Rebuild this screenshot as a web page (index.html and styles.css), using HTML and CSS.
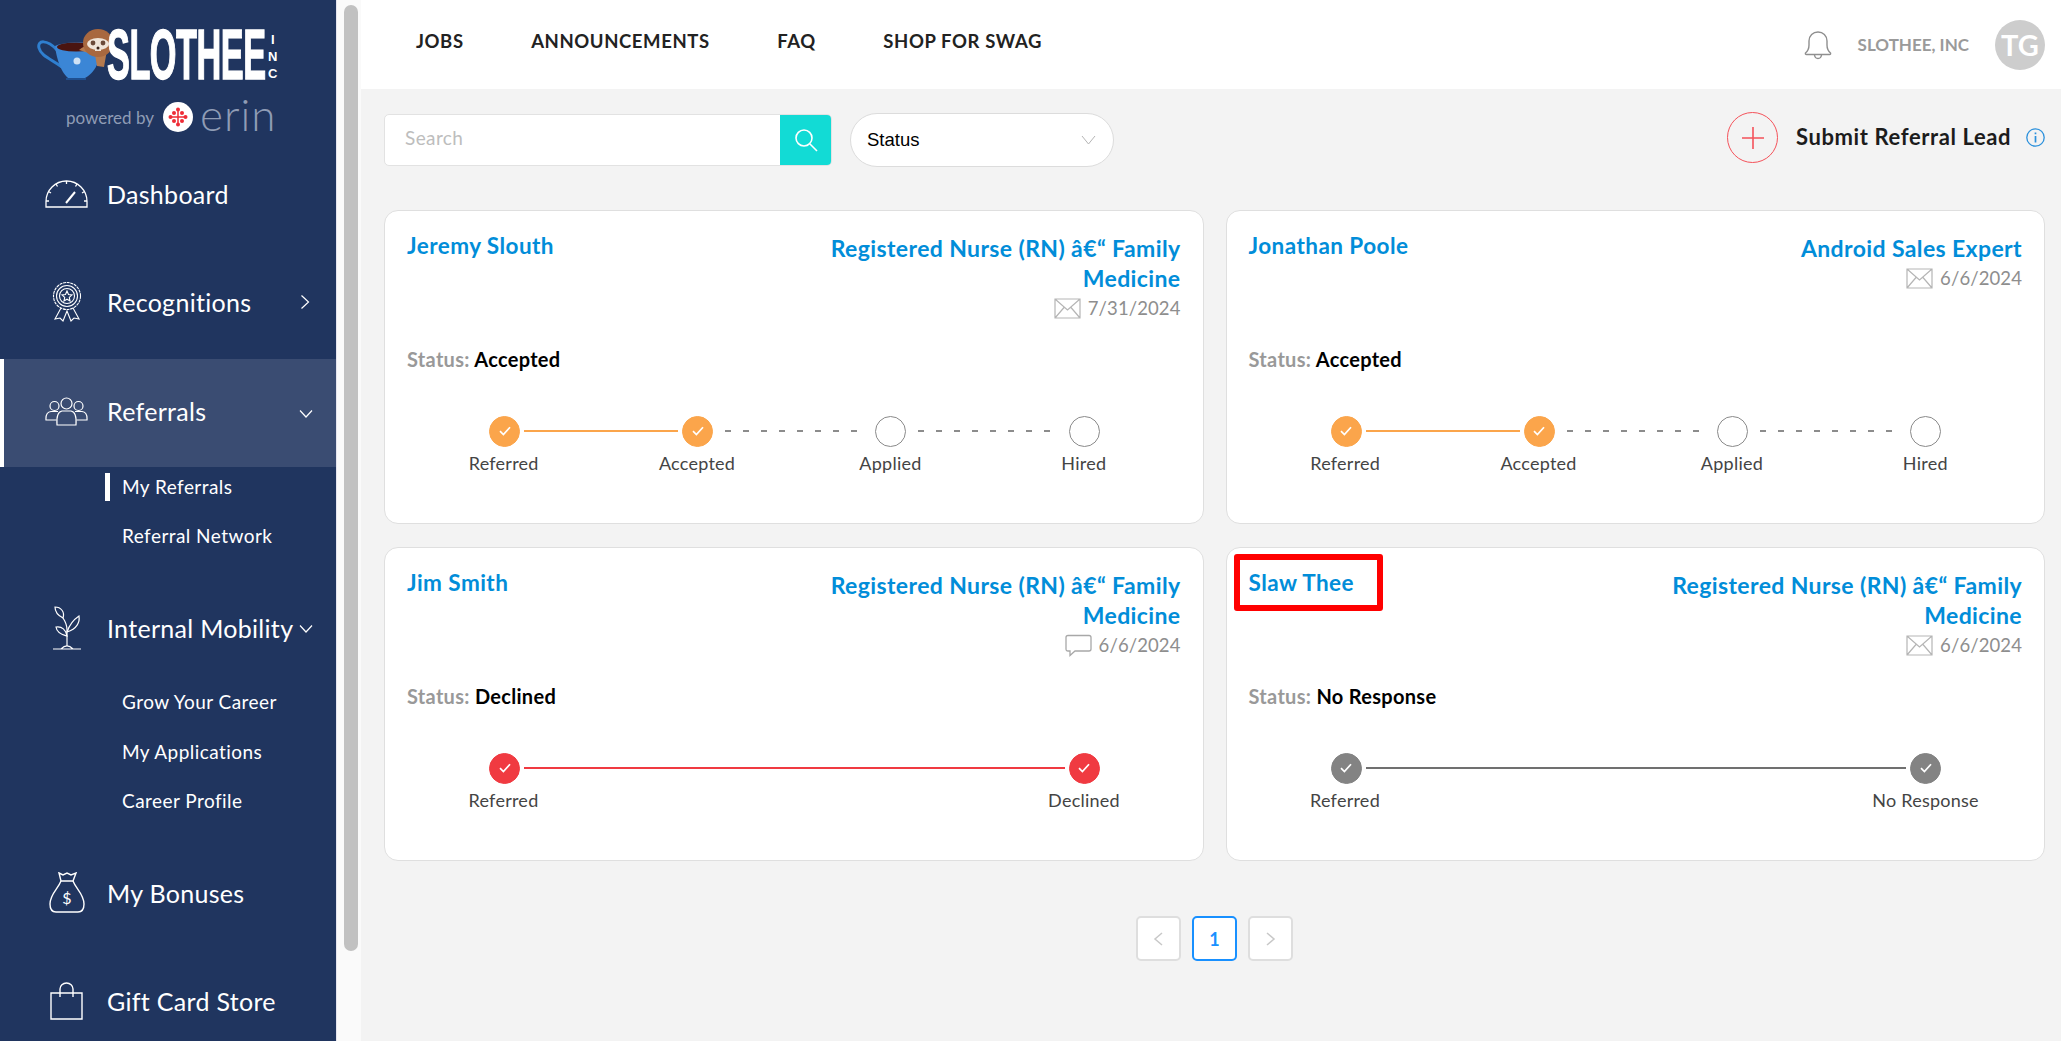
FILE: index.html
```html
<!DOCTYPE html>
<html lang="en">

<head>
    <meta charset="UTF-8">
    <meta name="viewport" content="width=device-width, initial-scale=1.0">
    <title>Slothee - My Referrals</title>
    <link rel="stylesheet" href="styles.css">
</head>

<body>
    <svg class="sprites" width="0" height="0">
        <symbol id="check" viewBox="0 0 12 10">
            <path d="M1 5.2 L4.4 8.6 L11 1.2" fill="none" stroke="#fff" stroke-width="1.7" />
        </symbol>
        <symbol id="mail" viewBox="0 0 27 21">
            <path d="M1 1 H26 V20 H1 Z M1 1 L13.5 12 L26 1 M1 20 L10 9.5 M26 20 L17 9.5" fill="none" stroke="#b5b5b5" stroke-width="1.2" />
        </symbol>
        <symbol id="chat" viewBox="0 0 27 23">
            <path d="M3 1.5 H24 Q26 1.5 26 3.5 V15 Q26 17 24 17 H10 L5 21.5 V17 H3 Q1 17 1 15 V3.5 Q1 1.5 3 1.5 Z" fill="none" stroke="#a8a8a8" stroke-width="1.3" />
        </symbol>
    </svg>

    <div id="app">
        <aside class="sidebar">
            <div class="logo">
                <div class="logo-top">
                    <svg class="logo-cup" width="78" height="56" viewBox="0 0 78 56">
                        <path d="M20 24 C10 13 0 14 2 22 C4 30 14 33 25 41" fill="none" stroke="#2f7fd0" stroke-width="3" />
                        <path d="M18 20 C30 15 52 15 64 20 C64 36 56 50 45 53 H33 C26 50 20 36 18 20 Z" fill="#3b86d6" />
                        <path d="M29 53 H49" stroke="#1f4f8f" stroke-width="2" />
                        <ellipse cx="39" cy="21" rx="19" ry="4.5" fill="#4a1410" />
                        <circle cx="40" cy="35" r="3.5" fill="#cfe2f5" />
                        <path d="M42 24 C50 16 60 20 70 24 L67 41 L60 40 L58 29 Z" fill="#b57a4e" />
                        <ellipse cx="61" cy="17" rx="15" ry="14" fill="#a8683f" />
                        <ellipse cx="61" cy="18" rx="11" ry="6" fill="#efe4d8" />
                        <path d="M61 15 V25" stroke="#efe4d8" stroke-width="6" />
                        <circle cx="56" cy="17" r="2.4" fill="#6b4a38" />
                        <circle cx="66" cy="17" r="2.4" fill="#6b4a38" />
                        <circle cx="61" cy="22" r="1.5" fill="#3a2318" />
                    </svg>
                    <span class="logo-name">SLOTHEE</span>
                    <span class="logo-inc"><span>I</span><span>N</span><span>C</span></span>
                </div>
                <div class="logo-sub">
                    <span class="powered">powered by</span>
                    <svg width="30" height="30" viewBox="0 0 30 30">
                        <circle cx="15" cy="15" r="15" fill="#fff" />
                        <path d="M15 6 V24 M6 15 H24" stroke="#ee2c36" stroke-width="1.5" />
                        <g fill="#ee2c36">
                            <circle cx="15" cy="7.5" r="2" />
                            <circle cx="15" cy="22.5" r="2" />
                            <circle cx="7.5" cy="15" r="2" />
                            <circle cx="22.5" cy="15" r="2" />
                            <circle cx="11" cy="11" r="2" />
                            <circle cx="19" cy="11" r="2" />
                            <circle cx="11" cy="19" r="2" />
                            <circle cx="19" cy="19" r="2" />
                        </g>
                    </svg>
                    <span class="erin">erin</span>
                </div>
            </div>

            <nav class="menu">
                <a class="menu-item">
                    <span class="menu-icon">
                        <svg width="43" height="28" viewBox="0 0 43 28" fill="none" stroke="#fff" stroke-width="1.3">
                            <path d="M1 27 V21.5 A20.5 20.5 0 0 1 42 21.5 V27 Z" />
                            <path d="M21.5 1 V4 M11 4 L12.5 6.5 M32 4 L30.5 6.5 M3.5 11.5 L6 13 M39.5 11.5 L37 13 M1 21 H4 M42 21 H39" />
                            <path d="M21 23 L30 12" stroke-width="2" />
                        </svg>
                    </span>
                    Dashboard
                </a>
                <a class="menu-item">
                    <span class="menu-icon">
                        <svg width="30" height="40" viewBox="0 0 30 40" fill="none" stroke="#fff" stroke-width="1.1">
                            <circle cx="15" cy="14" r="13.5" stroke-dasharray="3 .7" />
                            <circle cx="15" cy="14" r="10.5" />
                            <circle cx="15" cy="14" r="7.5" />
                            <path d="M15 9 L16.5 12.5 L20 13 L17.3 15.4 L18 19 L15 17.2 L12 19 L12.7 15.4 L10 13 L13.5 12.5 Z" />
                            <path d="M9 26 L3 37 L8 36 L11 39 L15 29 L19 39 L22 36 L27 37 L21 26" />
                        </svg>
                    </span>
                    Recognitions
                    <svg class="chevron right" width="10" height="16" viewBox="0 0 10 16">
                        <path d="M1.5 1.5 L8.5 8 L1.5 14.5" fill="none" stroke="#fff" stroke-width="1.2" />
                    </svg>
                </a>
                <a class="menu-item active">
                    <span class="menu-icon">
                        <svg width="43" height="29" viewBox="0 0 43 29" fill="none" stroke="#fff" stroke-width="1.2">
                            <circle cx="21.5" cy="6.5" r="5.5" />
                            <path d="M12 28 Q11 15 17 14 H26 Q32 15 31 28 Z" />
                            <circle cx="9.5" cy="9" r="4.5" />
                            <circle cx="33.5" cy="9" r="4.5" />
                            <path d="M11.5 23 H1 Q0.5 15 6 14.5 H13 M31.5 23 H42 Q42.5 15 37 14.5 H30" />
                        </svg>
                    </span>
                    Referrals
                    <svg class="chevron" width="14" height="10" viewBox="0 0 14 10">
                        <path d="M1 1.5 L7 8 L13 1.5" fill="none" stroke="#fff" stroke-width="1.2" />
                    </svg>
                </a>
                <div class="submenu first-sub">
                    <a class="sub-item current">My Referrals</a>
                    <a class="sub-item">Referral Network</a>
                </div>
                <a class="menu-item">
                    <span class="menu-icon">
                        <svg width="30" height="44" viewBox="0 0 30 44" fill="none" stroke="#fff" stroke-width="1.2">
                            <path d="M15 40 V24 C15 18 13 15 11 12" />
                            <path d="M11 12 C5 9 3 5 3 1 C9 1 13 6 11 12 Z" />
                            <path d="M15 26 C17 20 21 14 27 10 C28 16 25 23 15 26 Z" />
                            <path d="M15 30 C12 29 5 28 4 21 C10 20 14 24 15 30 Z" />
                            <path d="M1 43 H29 M9 43 Q15 37 21 43" />
                        </svg>
                    </span>
                    Internal Mobility
                    <svg class="chevron" width="14" height="10" viewBox="0 0 14 10">
                        <path d="M1 1.5 L7 8 L13 1.5" fill="none" stroke="#fff" stroke-width="1.2" />
                    </svg>
                </a>
                <div class="submenu second-sub">
                    <a class="sub-item">Grow Your Career</a>
                    <a class="sub-item">My Applications</a>
                    <a class="sub-item">Career Profile</a>
                </div>
                <a class="menu-item">
                    <span class="menu-icon">
                        <svg width="36" height="41" viewBox="0 0 36 41" fill="none" stroke="#fff" stroke-width="1.4">
                            <path d="M10 1 L14 3 L18 1 L22 3 L27 1 L24 9 H12 Z" />
                            <path d="M12 9 C9 17 1 22 1 32 C1 38 4 40 7 40 H29 C32 40 35 38 35 32 C35 22 27 17 24 9" />
                            <text class="bag-dollar" x="18" y="32" text-anchor="middle" fill="#fff" stroke="none">$</text>
                        </svg>
                    </span>
                    My Bonuses
                </a>
                <a class="menu-item">
                    <span class="menu-icon">
                        <svg width="33" height="38" viewBox="0 0 33 38" fill="none" stroke="#fff" stroke-width="1.4">
                            <path d="M10 11 H1 V37 H32 V11 H23" />
                            <path d="M10 15 V7 A6.5 6 0 0 1 23 7 V15 M10 11 H23" />
                        </svg>
                    </span>
                    Gift Card Store
                </a>
            </nav>
        </aside>

        <div class="scroll-track">
            <div class="scroll-thumb"></div>
        </div>

        <div class="page">
            <header class="topbar">
                <nav class="top-links">
                    <a>JOBS</a>
                    <a>ANNOUNCEMENTS</a>
                    <a>FAQ</a>
                    <a>SHOP FOR SWAG</a>
                </nav>
                <div class="top-user">
                    <svg width="28" height="30" viewBox="0 0 28 30" fill="none" stroke="#8f8f8f" stroke-width="1.4">
                        <path d="M1.5 23 Q5 20 5 15 V11 C5 5.5 9 2 14 2 C19 2 23 5.5 23 11 V15 Q23 20 26.5 23 Q27 24.5 25.5 24.5 H2.5 Q1 24.5 1.5 23 Z" />
                        <path d="M10.5 25 Q11 28.5 14 28.5 Q17 28.5 17.5 25" />
                    </svg>
                    <span class="company">SLOTHEE, INC</span>
                    <span class="avatar">TG</span>
                </div>
            </header>

            <main class="content">
                <div class="toolbar">
                    <div class="search">
                        <span class="search-text">Search</span>
                        <span class="search-btn">
                            <svg width="24" height="24" viewBox="0 0 24 24" fill="none" stroke="#fff" stroke-width="1.6">
                                <circle cx="10" cy="10" r="8" />
                                <path d="M16 16 L23 23" />
                            </svg>
                        </span>
                    </div>
                    <div class="status-select">
                        <span>Status</span>
                        <svg width="15" height="10" viewBox="0 0 15 10">
                            <path d="M1 1 L7.5 9 L14 1" fill="none" stroke="#b5b5b5" stroke-width="1" />
                        </svg>
                    </div>
                    <div class="submit-lead">
                        <span class="plus">
                            <svg width="24" height="24" viewBox="0 0 24 24">
                                <path d="M12 1 V23 M1 12 H23" stroke="#f4525a" stroke-width="1.6" />
                            </svg>
                        </span>
                        <span class="submit-text">Submit Referral Lead</span>
                        <svg width="19" height="19" viewBox="0 0 19 19" fill="none" stroke="#2a90dc" stroke-width="1.3">
                            <circle cx="9.5" cy="9.5" r="8.7" />
                            <path d="M9.5 8 V14.5 M9.5 4.5 V6.2" stroke-width="1.7" />
                        </svg>
                    </div>
                </div>

                <div class="cards">
                    <section class="card">
                        <div class="card-head">
                            <a class="name">Jeremy Slouth</a>
                            <div class="job">
                                <a>Registered Nurse (RN) â€&ldquo; Family Medicine</a>
                                <div class="date"><svg width="27" height="21"><use href="#mail" /></svg>7/31/2024</div>
                            </div>
                        </div>
                        <p class="status"><span>Status:</span> Accepted</p>
                        <div class="track">
                            <span class="dot orange"><svg width="12" height="10"><use href="#check" /></svg></span>
                            <span class="line orange"></span>
                            <span class="dot orange"><svg width="12" height="10"><use href="#check" /></svg></span>
                            <span class="line dashed"></span>
                            <span class="dot"></span>
                            <span class="line dashed"></span>
                            <span class="dot"></span>
                        </div>
                        <div class="labels">
                            <span>Referred</span>
                            <span>Accepted</span>
                            <span>Applied</span>
                            <span>Hired</span>
                        </div>
                    </section>

                    <section class="card">
                        <div class="card-head">
                            <a class="name">Jonathan Poole</a>
                            <div class="job">
                                <a>Android Sales Expert</a>
                                <div class="date"><svg width="27" height="21"><use href="#mail" /></svg>6/6/2024</div>
                            </div>
                        </div>
                        <p class="status"><span>Status:</span> Accepted</p>
                        <div class="track">
                            <span class="dot orange"><svg width="12" height="10"><use href="#check" /></svg></span>
                            <span class="line orange"></span>
                            <span class="dot orange"><svg width="12" height="10"><use href="#check" /></svg></span>
                            <span class="line dashed"></span>
                            <span class="dot"></span>
                            <span class="line dashed"></span>
                            <span class="dot"></span>
                        </div>
                        <div class="labels">
                            <span>Referred</span>
                            <span>Accepted</span>
                            <span>Applied</span>
                            <span>Hired</span>
                        </div>
                    </section>

                    <section class="card">
                        <div class="card-head">
                            <a class="name">Jim Smith</a>
                            <div class="job">
                                <a>Registered Nurse (RN) â€&ldquo; Family Medicine</a>
                                <div class="date"><svg width="27" height="23"><use href="#chat" /></svg>6/6/2024</div>
                            </div>
                        </div>
                        <p class="status"><span>Status:</span> Declined</p>
                        <div class="track">
                            <span class="dot red"><svg width="12" height="10"><use href="#check" /></svg></span>
                            <span class="line red"></span>
                            <span class="dot red"><svg width="12" height="10"><use href="#check" /></svg></span>
                        </div>
                        <div class="labels two">
                            <span>Referred</span>
                            <span>Declined</span>
                        </div>
                    </section>

                    <section class="card">
                        <div class="highlight"></div>
                        <div class="card-head">
                            <a class="name">Slaw Thee</a>
                            <div class="job">
                                <a>Registered Nurse (RN) â€&ldquo; Family Medicine</a>
                                <div class="date"><svg width="27" height="21"><use href="#mail" /></svg>6/6/2024</div>
                            </div>
                        </div>
                        <p class="status"><span>Status:</span> No Response</p>
                        <div class="track">
                            <span class="dot gray"><svg width="12" height="10"><use href="#check" /></svg></span>
                            <span class="line gray"></span>
                            <span class="dot gray"><svg width="12" height="10"><use href="#check" /></svg></span>
                        </div>
                        <div class="labels two">
                            <span>Referred</span>
                            <span>No Response</span>
                        </div>
                    </section>
                </div>

                <div class="pagination">
                    <span class="page-btn">
                        <svg width="11" height="14" viewBox="0 0 11 14"><path d="M9 1 L2 7 L9 13" fill="none" stroke="#c8c8c8" stroke-width="1.5" /></svg>
                    </span>
                    <span class="page-btn selected">1</span>
                    <span class="page-btn">
                        <svg width="11" height="14" viewBox="0 0 11 14"><path d="M2 1 L9 7 L2 13" fill="none" stroke="#c8c8c8" stroke-width="1.5" /></svg>
                    </span>
                </div>
            </main>
        </div>
    </div>
</body>

</html>
```

FILE: styles.css
```css
* {
    padding: 0;
    margin: 0;
    box-sizing: border-box;
}

html,
body {
    height: 100%;
    overflow: hidden;
}

body {
    font-family: Lato, "Noto Sans", sans-serif;
    color: #000;
}

.sprites {
    position: absolute;
}

#app {
    height: 100vh;
    display: flex;
}

/* sidebar */

.sidebar {
    width: 336px;
    flex-shrink: 0;
    background-color: #20355f;
    color: #fff;
    overflow: hidden;
}

.logo {
    height: 139.5px;
    padding: 26px 0 0 37px;
}

.logo-top {
    display: flex;
    align-items: flex-start;
}

.logo-cup {
    margin-right: -8px;
    flex-shrink: 0;
}

.logo-name {
    width: 158px;
    font-family: "Liberation Sans", sans-serif;
    font-weight: 700;
    font-size: 70px;
    line-height: 58px;
    letter-spacing: -1px;
    transform: scaleX(0.49);
    transform-origin: left center;
    white-space: nowrap;
    -webkit-text-stroke: 1.5px #fff;
}

.logo-inc {
    display: flex;
    flex-direction: column;
    margin: 5px 0 0 3px;
    font-family: "Liberation Sans", sans-serif;
    font-weight: 700;
    font-size: 13px;
    line-height: 17px;
    text-align: center;
}

.logo-sub {
    display: flex;
    align-items: center;
    margin: 18px 0 0 29px;
    color: #8f9cb5;
}

.powered {
    width: 97px;
    font-size: 17px;
}

.erin {
    margin: -6px 0 0 7px;
    font-weight: 300;
    font-size: 44px;
    line-height: 30px;
    letter-spacing: 1px;
}

.menu {
    display: flex;
    flex-direction: column;
}

.menu-item {
    height: 108.5px;
    flex-shrink: 0;
    display: flex;
    align-items: center;
    padding-left: 45px;
    font-size: 25px;
    letter-spacing: 0.3px;
    white-space: nowrap;
    position: relative;
}

.menu-item.active {
    height: 108px;
    margin-top: 2.5px;
    padding-bottom: 4px;
    background-color: #3a4c72;
    border-left: 4px solid #fff;
    padding-left: 41px;
}

.menu-icon {
    width: 43px;
    margin-right: 19px;
    display: flex;
    justify-content: center;
}

.chevron {
    position: absolute;
    right: 23px;
    top: 50%;
    margin-top: -4px;
}

.chevron.right {
    right: 26px;
    margin-top: -8px;
}

.bag-dollar {
    font-size: 16px;
}

.submenu {
    display: flex;
    flex-direction: column;
}

.first-sub {
    margin-top: -5.5px;
    height: 112px;
}

.second-sub {
    margin-top: -5px;
    height: 161.5px;
}

.sub-item {
    height: 49.5px;
    padding-left: 122px;
    display: flex;
    align-items: center;
    font-size: 19px;
    letter-spacing: 0.45px;
    position: relative;
}

.sub-item.current::before {
    content: "";
    position: absolute;
    left: 105px;
    top: 11px;
    width: 5px;
    height: 28px;
    background-color: #fff;
}

.scroll-track {
    width: 25px;
    flex-shrink: 0;
    padding: 5px 4px 0 7px;
    background-color: #fafafa;
    border-left: 1px solid #e4e4ee;
}

.scroll-thumb {
    width: 14px;
    height: 946px;
    border-radius: 7px;
    background-color: #c1c1c1;
}

/* top */

.page {
    flex: 1;
    display: flex;
    flex-direction: column;
    min-width: 0;
    background-color: #f3f3f3;
}

.topbar {
    height: 89px;
    flex-shrink: 0;
    background-color: white;
    display: flex;
    align-items: center;
    justify-content: space-between;
    padding: 0 16px 8px 55px;
}

.top-links {
    display: flex;
    gap: 67.5px;
    font-size: 18.5px;
    letter-spacing: 0.6px;
    font-weight: 700;
    color: #222;
}

.top-user {
    display: flex;
    align-items: center;
    padding-top: 8px;
}

.company {
    margin: 0 26px 0 26px;
    font-size: 17px;
    font-weight: 700;
    color: #9a9a9a;
}

.avatar {
    width: 50px;
    height: 50px;
    border-radius: 50%;
    background-color: #cdcdcd;
    color: white;
    font-size: 29px;
    font-weight: 700;
    display: flex;
    align-items: center;
    justify-content: center;
}

/* toolbar */

.content {
    flex: 1;
    padding: 24px 16px 0 23px;
}

.toolbar {
    height: 97px;
    display: flex;
    align-items: flex-start;
}

.search {
    width: 448px;
    height: 52px;
    margin-top: 1px;
    background-color: white;
    border: 1px solid #e2e2e2;
    border-radius: 5px;
    display: flex;
    justify-content: space-between;
    overflow: hidden;
}

.search-text {
    padding-left: 20px;
    line-height: 46px;
    font-size: 19px;
    letter-spacing: 0.4px;
    color: #bdbdbd;
}

.search-btn {
    width: 51px;
    background-color: #12dbd5;
    display: flex;
    align-items: center;
    justify-content: center;
}

.status-select {
    width: 264px;
    height: 54px;
    margin-left: 18px;
    padding: 0 17px 0 16px;
    background-color: white;
    border: 1px solid #dcdcdc;
    border-radius: 27px;
    display: flex;
    align-items: center;
    justify-content: space-between;
    font-family: "Liberation Sans", sans-serif;
    font-size: 18.5px;
}

.submit-lead {
    margin-top: -1px;
    margin-left: auto;
    display: flex;
    align-items: center;
}

.plus {
    width: 51px;
    height: 51px;
    border: 1.5px solid #f4525a;
    border-radius: 50%;
    display: flex;
    align-items: center;
    justify-content: center;
    margin-right: 18px;
}

.submit-text {
    width: 230px;
    margin-bottom: 3px;
    font-size: 22px;
    letter-spacing: 0.6px;
    font-weight: 700;
    color: #1c1c1c;
}

/* cards */

.cards {
    display: grid;
    grid-template-columns: 1fr 1fr;
    gap: 23px 22px;
}

.card {
    height: 314px;
    padding: 22px 22px 0 22px;
    background-color: white;
    border: 1px solid #dfdfdf;
    border-radius: 14px;
    position: relative;
}

.highlight {
    position: absolute;
    left: 7px;
    top: 6px;
    width: 149px;
    height: 57px;
    border: 6px solid #ff0000;
    border-radius: 3px;
}

.card-head {
    height: 114px;
    display: flex;
    justify-content: space-between;
    align-items: flex-start;
}

.name {
    font-size: 22.5px;
    letter-spacing: 0.45px;
    line-height: 26px;
    font-weight: 700;
    color: #018dd9;
}

.job {
    width: 400px;
    text-align: right;
    font-size: 23px;
    letter-spacing: 0.38px;
    line-height: 30px;
    font-weight: 700;
    color: #018dd9;
}

.date {
    display: flex;
    align-items: center;
    justify-content: flex-end;
    gap: 7px;
    font-size: 18.5px;
    letter-spacing: 0.1px;
    font-weight: 400;
    color: #8e8e8e;
}

.status {
    height: 28px;
    font-size: 20px;
    letter-spacing: 0.3px;
    line-height: 24px;
    font-weight: 700;
}

.status span {
    color: #999;
}

.track {
    display: flex;
    align-items: center;
    height: 32px;
    margin-top: 40px;
    padding: 0 81px 0 82px;
}

.dot {
    width: 31px;
    height: 31px;
    flex-shrink: 0;
    border-radius: 50%;
    border: 1px solid #8a8a8a;
    background-color: white;
    display: flex;
    align-items: center;
    justify-content: center;
}

.dot.orange {
    background-color: #fba54b;
    border-color: #fba54b;
}

.dot.red {
    background-color: #f03a41;
    border-color: #f03a41;
}

.dot.gray {
    background-color: #838383;
    border-color: #838383;
}

.line {
    flex: 1;
    height: 2px;
    margin: 0 4px;
    padding: 0 3px 0 8px;
}

.line.orange {
    background-color: #fba54b;
}

.line.red {
    background-color: #f03a41;
}

.line.gray {
    background-color: #707070;
}

.line.dashed {
    background-clip: content-box;
    background-origin: content-box;
    background-image: repeating-linear-gradient(to right, #8c8c8c 0, #8c8c8c 6px, transparent 6px, transparent 18px);
}

.labels {
    display: grid;
    grid-template-columns: repeat(4, 1fr);
    margin-top: 4px;
    text-align: center;
    font-size: 18px;
    letter-spacing: 0.25px;
    line-height: 24px;
    color: #444;
}

.labels.two {
    grid-template-columns: 193px 193px;
    justify-content: space-between;
}

/* pagination */

.pagination {
    margin-top: 55px;
    display: flex;
    justify-content: center;
    gap: 11px;
}

.page-btn {
    width: 45px;
    height: 45px;
    background-color: white;
    border: 2px solid #dedede;
    border-radius: 5px;
    display: flex;
    align-items: center;
    justify-content: center;
    font-size: 18px;
    font-weight: 700;
}

.page-btn.selected {
    border-color: #1890ff;
    color: #1890ff;
}
```
